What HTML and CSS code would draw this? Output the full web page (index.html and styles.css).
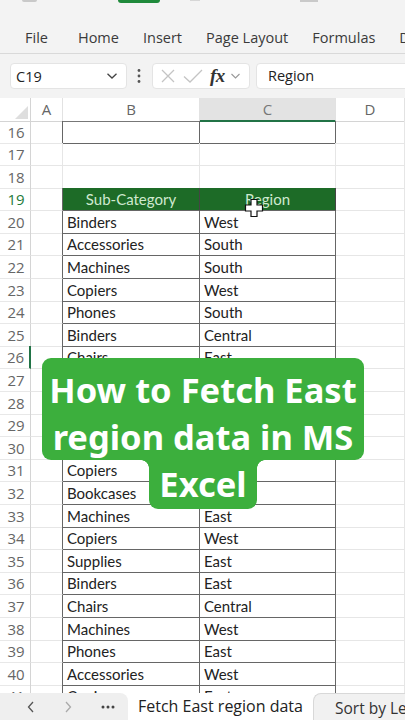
FILE: index.html
```html
<!DOCTYPE html>
<html>
<head>
<meta charset="utf-8">
<link rel="stylesheet" href="styles.css">
</head>
<body>
<div class="ribbon">
  <div class="strip">
    <span class="blob b1"></span>
    <span class="pill"></span>
    <span class="blob b2"></span>
    <span class="blob b3"></span>
  </div>
  <nav class="tabs">
    <span class="tab file">File</span>
    <span class="tab">Home</span>
    <span class="tab">Insert</span>
    <span class="tab">Page Layout</span>
    <span class="tab">Formulas</span>
    <span class="tab">D</span>
  </nav>
</div>

<div class="fbar">
  <div class="namebox">
    <span>C19</span>
    <svg class="chev" width="12" height="8" viewBox="0 0 12 8"><path d="M1.5 1.8 L6 6 L10.5 1.8" fill="none" stroke="#444" stroke-width="1.3"/></svg>
  </div>
  <div class="vdots">
    <svg width="4" height="16" viewBox="0 0 4 16"><circle cx="2" cy="2.5" r="1.4" fill="#555"/><circle cx="2" cy="8" r="1.4" fill="#555"/><circle cx="2" cy="13.5" r="1.4" fill="#555"/></svg>
  </div>
  <div class="fbtns">
    <svg width="18" height="18" viewBox="0 0 18 18"><path d="M3 3 L15 15 M15 3 L3 15" stroke="#c4c4c4" stroke-width="1.3" fill="none"/></svg>
    <svg width="22" height="18" viewBox="0 0 22 18"><path d="M2 9.5 L8 15 L20 3" stroke="#c4c4c4" stroke-width="1.3" fill="none"/></svg>
    <span class="fx">fx</span>
    <svg width="11" height="8" viewBox="0 0 11 8"><path d="M1.5 2 L5.5 6 L9.5 2" fill="none" stroke="#999" stroke-width="1.1"/></svg>
  </div>
  <div class="finput">Region</div>
</div>

<div class="sheet">
  <div class="row hdr">
    <div class="rh corner"><span class="tri"></span></div>
    <div class="ch">A</div>
    <div class="ch dk">B</div>
    <div class="ch sel">C</div>
    <div class="ch">D</div>
  </div>
  <div class="row"><div class="rh">16</div><div class="c ad"></div><div class="c tb"></div><div class="c tb"></div><div class="c"></div></div>
  <div class="row"><div class="rh">17</div><div class="c"></div><div class="c"></div><div class="c"></div><div class="c"></div></div>
  <div class="row"><div class="rh">18</div><div class="c"></div><div class="c bd"></div><div class="c bd"></div><div class="c"></div></div>
  <div class="row"><div class="rh act">19</div><div class="c ad"></div><div class="c tb th">Sub-Category</div><div class="c tb th">Region</div><div class="c"></div></div>
  <div class="row"><div class="rh">20</div><div class="c ad"></div><div class="c tb">Binders</div><div class="c tb">West</div><div class="c"></div></div>
  <div class="row"><div class="rh">21</div><div class="c ad"></div><div class="c tb">Accessories</div><div class="c tb">South</div><div class="c"></div></div>
  <div class="row"><div class="rh">22</div><div class="c ad"></div><div class="c tb">Machines</div><div class="c tb">South</div><div class="c"></div></div>
  <div class="row"><div class="rh">23</div><div class="c ad"></div><div class="c tb">Copiers</div><div class="c tb">West</div><div class="c"></div></div>
  <div class="row"><div class="rh">24</div><div class="c ad"></div><div class="c tb">Phones</div><div class="c tb">South</div><div class="c"></div></div>
  <div class="row"><div class="rh">25</div><div class="c ad"></div><div class="c tb">Binders</div><div class="c tb">Central</div><div class="c"></div></div>
  <div class="row"><div class="rh mark">26</div><div class="c ad"></div><div class="c tb">Chairs</div><div class="c tb">East</div><div class="c"></div></div>
  <div class="row"><div class="rh">27</div><div class="c ad"></div><div class="c tb">Phones</div><div class="c tb">East</div><div class="c"></div></div>
  <div class="row"><div class="rh">28</div><div class="c ad"></div><div class="c tb">Storage</div><div class="c tb">West</div><div class="c"></div></div>
  <div class="row"><div class="rh">29</div><div class="c ad"></div><div class="c tb">Art</div><div class="c tb">East</div><div class="c"></div></div>
  <div class="row"><div class="rh">30</div><div class="c ad"></div><div class="c tb">Paper</div><div class="c tb">Central</div><div class="c"></div></div>
  <div class="row"><div class="rh">31</div><div class="c ad"></div><div class="c tb">Copiers</div><div class="c tb">East</div><div class="c"></div></div>
  <div class="row"><div class="rh">32</div><div class="c ad"></div><div class="c tb">Bookcases</div><div class="c tb">South</div><div class="c"></div></div>
  <div class="row"><div class="rh">33</div><div class="c ad"></div><div class="c tb">Machines</div><div class="c tb">East</div><div class="c"></div></div>
  <div class="row"><div class="rh">34</div><div class="c ad"></div><div class="c tb">Copiers</div><div class="c tb">West</div><div class="c"></div></div>
  <div class="row"><div class="rh">35</div><div class="c ad"></div><div class="c tb">Supplies</div><div class="c tb">East</div><div class="c"></div></div>
  <div class="row"><div class="rh">36</div><div class="c ad"></div><div class="c tb">Binders</div><div class="c tb">East</div><div class="c"></div></div>
  <div class="row"><div class="rh">37</div><div class="c ad"></div><div class="c tb">Chairs</div><div class="c tb">Central</div><div class="c"></div></div>
  <div class="row"><div class="rh">38</div><div class="c ad"></div><div class="c tb">Machines</div><div class="c tb">West</div><div class="c"></div></div>
  <div class="row"><div class="rh">39</div><div class="c ad"></div><div class="c tb">Phones</div><div class="c tb">East</div><div class="c"></div></div>
  <div class="row"><div class="rh">40</div><div class="c ad"></div><div class="c tb">Accessories</div><div class="c tb">West</div><div class="c"></div></div>
  <div class="row"><div class="rh">41</div><div class="c ad"></div><div class="c tb">Copiers</div><div class="c tb">East</div><div class="c"></div></div>

  <svg class="cursor" width="20" height="20" viewBox="0 0 20 20"><path d="M7 1.5 H13 V7 H18.5 V13 H13 V18.5 H7 V13 H1.5 V7 H7 Z" fill="#fff" stroke="#111" stroke-width="1.2"/></svg>

  <div class="title">
    <div class="l12">How to Fetch East<br>region data in MS</div>
    <div class="l3">Excel</div>
  </div>
</div>

<div class="sheettabs">
  <div class="nav">
    <svg width="10" height="14" viewBox="0 0 10 14"><path d="M7 2 L2.5 7 L7 12" fill="none" stroke="#555" stroke-width="1.3"/></svg>
    <svg width="10" height="14" viewBox="0 0 10 14"><path d="M3 2 L7.5 7 L3 12" fill="none" stroke="#aaa" stroke-width="1.3"/></svg>
    <svg width="16" height="6" viewBox="0 0 16 6"><circle cx="3" cy="3" r="1.5" fill="#444"/><circle cx="8" cy="3" r="1.5" fill="#444"/><circle cx="13" cy="3" r="1.5" fill="#444"/></svg>
  </div>
  <div class="stab active">Fetch East region data</div>
  <div class="stab other">Sort by Level</div>
</div>
</body>
</html>
```

FILE: styles.css
```css
* { box-sizing: border-box; }
html, body { margin: 0; padding: 0; }
body {
  width: 405px;
  height: 720px;
  overflow: hidden;
  background: #fff;
  font-family: "Open Sans", "Noto Sans", sans-serif;
  color: #333;
}

/* ribbon */
.ribbon {
  height: 54px;
  background: #f3f3f3;
  border-bottom: 1px solid #d9d9d9;
  display: flex;
  flex-direction: column;
}
.strip {
  height: 24px;
  position: relative;
}
.blob, .pill { position: absolute; top: 0; }
.b1 { left: 22px; width: 15px; height: 2px; background: #c9c9c9; border-radius: 0 0 2px 2px; }
.pill { left: 118px; width: 42px; height: 3px; background: #1f8a3b; border-radius: 0 0 10px 10px; }
.b2 { left: 190px; width: 10px; height: 1px; background: #d6d6d6; }
.b3 { left: 300px; width: 18px; height: 2px; background: #c9c9c9; }
.tabs {
  display: flex;
  gap: 24px;
  padding-left: 25px;
  font-size: 14.5px;
  color: #3a3a3a;
  white-space: nowrap;
  line-height: 28px;
}
.tab.file { margin-right: 6px; }

/* formula bar */
.fbar {
  height: 44px;
  background: #f3f3f3;
  display: flex;
  align-items: center;
  padding-left: 10px;
  overflow: hidden;
  white-space: nowrap;
}
.namebox {
  width: 117px;
  height: 26px;
  background: #fff;
  border: 1px solid #e4e4e4;
  border-radius: 4px;
  display: flex;
  align-items: center;
  justify-content: space-between;
  padding: 0 8px 0 5px;
  font-size: 14.5px;
  color: #222;
}
.vdots {
  width: 25px;
  display: flex;
  justify-content: center;
  padding-right: 2px;
}
.fbtns {
  width: 98px;
  height: 26px;
  background: #fff;
  border: 1px solid #e4e4e4;
  border-radius: 4px;
  display: flex;
  align-items: center;
  padding-left: 6px;
  gap: 5px;
}
.fx {
  font-family: "Liberation Serif", "DejaVu Serif", serif;
  font-style: italic;
  font-weight: 700;
  font-size: 19px;
  line-height: 20px;
  color: #333;
  margin-left: 1px;
  letter-spacing: -0.5px;
}
.finput {
  flex: 1;
  margin-left: 6px;
  margin-right: -10px;
  height: 26px;
  background: #fff;
  border: 1px solid #e4e4e4;
  border-radius: 4px;
  padding-left: 11px;
  line-height: 24px;
  font-size: 14.5px;
  color: #222;
}

/* sheet */
.sheet {
  position: relative;
  height: 595px;
  overflow: hidden;
  background: #fff;
}
.row {
  display: grid;
  grid-template-columns: 31px 32px 137px 136px 69px;
  height: 22.6px;
}
.row.hdr { height: 22.5px; }
.rh {
  border-right: 1px solid #d4d4d4;
  border-bottom: 1px solid #e8e8e8;
  font-size: 15px;
  color: #666;
  text-align: center;
  line-height: 22px;
  padding-left: 2px;
}
.rh.act { color: #1e7a3a; }
.rh.mark { border-right: 2px solid #217346; }
.corner { position: relative; border-bottom: 1px solid #d4d4d4; }
.tri {
  position: absolute;
  right: 2px;
  bottom: 2px;
  width: 0;
  height: 0;
  border-left: 13px solid transparent;
  border-bottom: 13px solid #dedede;
}
.ch {
  border-right: 1px solid #e2e2e2;
  border-bottom: 1px solid #d4d4d4;
  text-align: center;
  font-size: 15px;
  color: #666;
  line-height: 22px;
}
.ch.dk { border-bottom: 1px solid #777; }
.ch.sel {
  background: #e3e3e3;
  border-bottom: 2px solid #217346;
  color: #777;
}
.c {
  border-right: 1px solid #e6e6e6;
  border-bottom: 1px solid #e6e6e6;
  font-family: "Lato", "Open Sans", sans-serif;
  font-size: 15px;
  color: #222;
  line-height: 22px;
  padding-left: 4px;
  white-space: nowrap;
  overflow: hidden;
}
.c.ad { border-right: 1px solid #666; }
.c.bd { border-bottom: 1px solid #555; }
.c.tb {
  border-right: 1px solid #666;
  border-bottom: 1px solid #666;
}
.c.th {
  background: #1d6b27;
  color: #cfe9cf;
  text-align: center;
  padding-left: 0;
  border-right-color: #444;
}

.cursor {
  position: absolute;
  left: 244px;
  top: 100px;
}

/* title overlay */
.title {
  position: absolute;
  left: 42px;
  top: 260px;
  width: 322px;
  text-align: center;
  font-family: "Noto Sans", "Open Sans", sans-serif;
  font-weight: 700;
  font-size: 34.5px;
  line-height: 47px;
  color: #fff;
}
.l12 {
  background: #3caf3d;
  border-radius: 9px;
  padding-top: 8px;
  white-space: nowrap;
}
.l3 {
  position: relative;
  display: inline-block;
  vertical-align: top;
  background: #3caf3d;
  border-radius: 0 0 9px 9px;
  padding: 0 8px 2px;
  width: 108px;
}
.l3::before, .l3::after {
  content: "";
  position: absolute;
  top: 0;
  width: 8px;
  height: 8px;
}
.l3::before {
  left: -8px;
  background: radial-gradient(circle at 0 100%, transparent 7.5px, #3caf3d 8px);
}
.l3::after {
  right: -8px;
  background: radial-gradient(circle at 100% 100%, transparent 7.5px, #3caf3d 8px);
}

/* sheet tabs */
.sheettabs {
  height: 27px;
  display: flex;
  background: #fff;
  white-space: nowrap;
  overflow: hidden;
}
.nav {
  width: 128px;
  flex: none;
  background: #efefef;
  border-top-right-radius: 8px;
  display: flex;
  align-items: center;
  padding-left: 26px;
  gap: 27px;
}
.stab {
  flex: none;
  font-size: 15px;
  color: #222;
  line-height: 27px;
}
.active {
  width: 183px;
  background: #fff;
  padding-left: 10px;
  font-size: 16px;
  font-weight: 500;
}
.other {
  margin-left: 2px;
  padding-left: 21px;
  width: 140px;
  background: #f1f1f1;
  border-top: 1px solid #d8d8d8;
  border-left: 1px solid #d8d8d8;
  border-top-left-radius: 8px;
  color: #333;
  line-height: 28px;
  font-size: 15.5px;
}
```
